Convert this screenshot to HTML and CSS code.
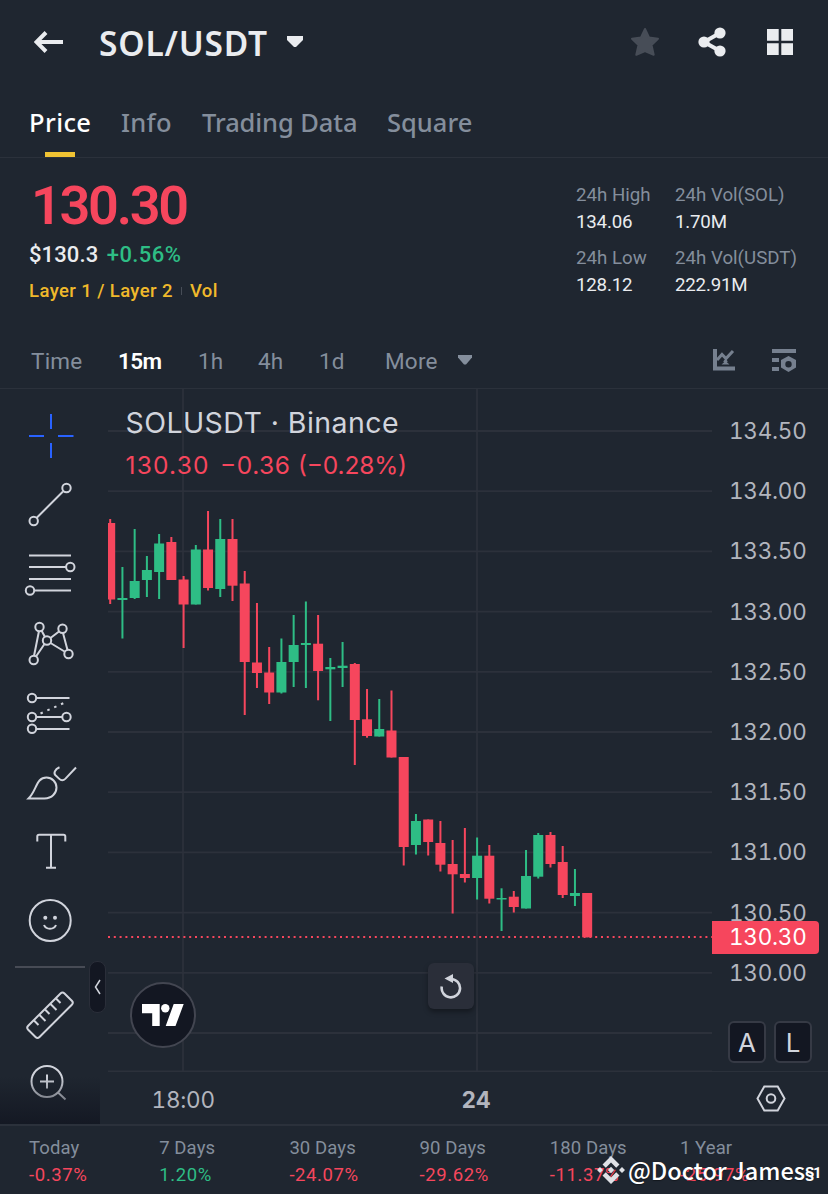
FILE: index.html
```html
<!DOCTYPE html>
<html lang="en">
<head>
    <meta charset="utf-8">
    <title>SOL/USDT</title>
    <link rel="stylesheet" href="styles.css">
</head>
<body>
    <div class="header">
        <svg class="back" width="30" height="24" viewBox="0 0 30 24"><path d="M29 12H3M12 2.5L2.500 12l9.500 9.500" fill="none" stroke="#eaecef" stroke-width="4"/></svg>
        <h1>SOL/USDT</h1>
        <svg class="caret" width="16" height="12" viewBox="0 0 16 12"><path d="M0 0h16v4l-7 7h-2l-7-7z" fill="#eaecef"/></svg>
        <div class="actions">
            <svg width="30" height="30" viewBox="0 0 30 30"><path d="M15 2l4 8.500 9 1.200-6.500 6.300 2.200 9.800L15 24l-8.700 3.800L8.500 18 2 11.700l9-1.200z" fill="#474d57" stroke="#474d57" stroke-width="2" stroke-linejoin="round"/></svg>
            <svg width="30" height="30" viewBox="0 0 30 30"><g fill="#eaecef"><circle cx="23" cy="6" r="5.600"/><circle cx="23" cy="24" r="5.600"/><circle cx="7" cy="15" r="5.600"/></g><path d="M23 6L7 15l16 9" fill="none" stroke="#eaecef" stroke-width="4"/></svg>
            <svg width="26" height="26" viewBox="0 0 26 26"><path d="M0 0h11.700v11.700H0zM14.300 0H26v11.700H14.300zM0 14.300h11.700V26H0zM14.300 14.300H26V26H14.300z" fill="#eaecef"/></svg>
        </div>
    </div>

    <div class="tabs">
        <span class="tab active">Price</span>
        <span class="tab info">Info</span>
        <span class="tab data">Trading Data</span>
        <span class="tab">Square</span>
    </div>

    <div class="summary">
        <div class="quote">
            <div class="last">130.30</div>
            <div class="fiat">$130.3 <span class="up">+0.56%</span></div>
            <div class="tags"><span>Layer 1 / Layer 2</span><i></i><span>Vol</span></div>
        </div>
        <div class="stats">
            <div><label>24h High</label><b>134.06</b></div>
            <div><label>24h Vol(SOL)</label><b>1.70M</b></div>
            <div><label>24h Low</label><b>128.12</b></div>
            <div><label>24h Vol(USDT)</label><b>222.91M</b></div>
        </div>
    </div>

    <div class="intervals">
        <span>Time</span>
        <span class="active">15m</span>
        <span>1h</span>
        <span>4h</span>
        <span>1d</span>
        <span>More</span>
        <svg class="more" width="14" height="10" viewBox="0 0 14 10"><path d="M0 0h14v2.500L8 9.500H6L0 2.500z" fill="#848e9c"/></svg>
        <div class="chart-actions">
            <svg width="22" height="22" viewBox="0 0 22 22"><path d="M2 0v19.500h20" fill="none" stroke="#76808f" stroke-width="4"/><path d="M4 11l5-5.500 4 4L20 2" fill="none" stroke="#76808f" stroke-width="3"/><path d="M12.500 9.500l2.300 3-2.300 1.500-2.300-1.500zM12.500 12l4 3.500h-8z" fill="#76808f"/></svg>
            <svg width="24" height="24" viewBox="0 0 24 24"><path d="M0 2h24M0 11h7M0 20h7" fill="none" stroke="#76808f" stroke-width="4"/><path d="M16.500 7l7.500 4v7.500l-7.500 4.500L9 18.500V11zM16.500 12a3.200 3.200 0 1 0 0 6.400 3.200 3.200 0 0 0 0-6.400z" fill="#76808f" fill-rule="evenodd"/></svg>
        </div>
    </div>

    <div class="chart">
        <div class="tools">
            <svg class="cross" viewBox="0 0 100 69"><path d="M51 13v15M51 42v15M29 35h15M58 35h15.500"/></svg>
            <svg viewBox="0 0 100 69"><path d="M36.500 48L63 21.500"/><circle cx="66.500" cy="18" r="4.200"/><circle cx="33.700" cy="51" r="4.200"/></svg>
            <svg viewBox="0 0 100 69"><path d="M29 16.500h42M29 28h37M29 40h42M34 51.500h37"/><circle cx="70.300" cy="28" r="4.200"/><circle cx="30" cy="51.500" r="4.200"/></svg>
            <svg viewBox="0 0 100 69"><path d="M34 48l5-25M41.500 22.500l3.500 6.500M50.500 30L59 23.500M63 25l4.500 17M64.500 43.500L50.500 35M44.500 36L36 48.500"/><circle cx="39.500" cy="19" r="4.200"/><circle cx="62.500" cy="20.700" r="4.200"/><circle cx="47" cy="32.500" r="4.200"/><circle cx="68.500" cy="46" r="4.200"/><circle cx="33.700" cy="52" r="4.200"/></svg>
            <svg viewBox="0 0 100 69"><path d="M36 21h33.500M36 40h26M36 52h33.500"/><path class="dots" d="M40.500 36.500L66 25"/><circle cx="32" cy="21" r="4.200"/><circle cx="32" cy="40" r="4.200"/><circle cx="66.500" cy="40" r="4.200"/><circle cx="32" cy="51.800" r="4.200"/></svg>
            <svg viewBox="0 0 100 69"><path d="M28.500 52.500C37 44 36 31.500 46.500 31.500C52 31.500 56.500 36 56.500 41.500C56.500 47 52 52.500 44.500 52.500zM59.500 21.300c-5 2-6 6-4 8l3.500 3.300c2 2 4.500 2 6.500 0l10.500-11.100"/></svg>
            <svg viewBox="0 0 100 69"><path d="M37.300 26.500v-5q0-1.800 1.800-1.800h24.400q1.800 0 1.800 1.800v5M51 19.700v33M46 52.700h10"/></svg>
            <svg viewBox="0 0 100 69"><circle cx="50.200" cy="36.500" r="20.500"/><path d="M44 41c2 5 10 5 12 0"/><g class="solid"><circle cx="45.300" cy="33.700" r="2"/><circle cx="55" cy="33.700" r="2"/></g></svg>
            <hr>
            <svg viewBox="0 0 100 69"><path d="M60.500 12.500q2-2 4 0l7.300 7.300q2 2 0 4L39.500 56q-2 2-4 0l-7.300-7.300q-2-2 0-4zM34 39.500l4.500 4.500M39.500 34l6 6M45 28.500l4.500 4.500M50.500 23l6 6M56 17.500l4.500 4.500"/></svg>
            <svg viewBox="0 0 100 69"><circle cx="47" cy="31.500" r="15.500"/><path d="M47 24.500v14M40 31.500h14M58 42.500l7.500 7"/></svg>
            <div class="collapse"><svg width="7" height="16" viewBox="0 0 7 16"><path d="M6 1L1.500 8 6 15" fill="none" stroke="#d1d4dc" stroke-width="1.500"/></svg></div>
        </div>

        <div class="plot">
            <svg width="612" height="683" viewBox="100 389 612 683">
                <g id="grid"></g>
                <g id="candles"></g>
                <path class="price-line" d="M108 937H712"/>
                <text class="name" x="125.500" y="432.500" textLength="273">SOLUSDT · Binance</text>
                <text class="change" x="125.500" y="474" textLength="83">130.30</text>
                <text class="change" x="220" y="474" textLength="70">−0.36</text>
                <text class="change" x="298" y="474" textLength="109">(−0.28%)</text>
            </svg>
            <div class="tv-logo"><svg width="42" height="22" viewBox="0 0 42 22"><path d="M0 0h17.700v22h-7.500V9.300H0zM31.700 0h10L33.500 22H23.700z" fill="#fff"/><circle cx="23.300" cy="4.300" r="4.200" fill="#fff"/></svg></div>
            <div class="reset"><svg width="24" height="26" viewBox="0 0 24 26"><path d="M2.800 13.500A9.200 9.200 0 1 0 12 6H10.500" fill="none" stroke="#d1d4dc" stroke-width="2.600"/><path d="M5.500 5.500L14 1v9z" fill="#d1d4dc"/></svg></div>
        </div>

        <div class="scale">
            <span>134.50</span><span>134.00</span><span>133.50</span><span>133.00</span><span>132.50</span>
            <span>132.00</span><span>131.50</span><span>131.00</span><span>130.50</span><span>130.00</span>
            <div class="current">130.30</div>
            <div class="modes"><b>A</b><b>L</b></div>
        </div>

        <div class="time-axis">
            <span>18:00</span>
            <strong>24</strong>
        </div>
        <div class="axis-settings"><svg width="30" height="27" viewBox="0 0 30 27"><path d="M8.300 1.500h13.400l6.800 12-6.800 12H8.300l-6.800-12z"/><circle cx="15" cy="13.500" r="4.300"/></svg></div>
    </div>

    <div class="periods">
        <div><label>Today</label><span class="down">-0.37%</span></div>
        <div><label>7 Days</label><span class="up">1.20%</span></div>
        <div><label>30 Days</label><span class="down">-24.07%</span></div>
        <div><label>90 Days</label><span class="down">-29.62%</span></div>
        <div><label>180 Days</label><span class="down">-11.37%</span></div>
        <div><label>1 Year</label><span class="down">-25.97%</span></div>
        <div class="credit">
            <svg width="28" height="28" viewBox="0 0 28 28"><path d="M14 0l8.500 8.500-3.300 3.300L14 6.600l-5.200 5.200-3.300-3.300zM14 28l8.500-8.500-3.300-3.300-5.200 5.200-5.200-5.200-3.300 3.300zM14 10.800l3.200 3.200-3.200 3.200-3.200-3.200zM3 11l3 3-3 3-3-3zM25 11l3 3-3 3-3-3z" fill="#dfe1e6"/></svg>
            <span>@Doctor James</span><small>§1</small>
        </div>
    </div>

    <script>
        // [colour, high, body top, body bottom, low]
        const candles = [
            ['r', 519, 523, 599.5, 604], ['g', 567, 598, 600, 638.5], ['g', 529, 581, 598, 599],
            ['g', 556, 570, 580, 597], ['g', 534, 543.5, 572, 599], ['r', 537, 542, 580, 580],
            ['r', 576, 579.5, 604.5, 648], ['g', 545, 549.5, 604.5, 604.5], ['r', 511, 549.5, 588, 590.5],
            ['g', 519, 539, 589, 597], ['r', 519, 539, 585.7, 601], ['r', 571, 583.5, 662, 715],
            ['r', 603, 662.5, 673, 688], ['r', 647, 672.5, 692.5, 704], ['g', 638.5, 662, 692.5, 693.5],
            ['g', 615, 645, 662, 687], ['g', 601.5, 643, 645, 688], ['r', 615, 643.7, 671, 700.3],
            ['g', 658, 667, 669.3, 721], ['g', 642, 665.7, 668, 687], ['r', 663, 664, 720, 765],
            ['r', 689, 719.3, 736, 737.7], ['g', 699, 729, 736.5, 736.5], ['r', 690.5, 730.5, 757.5, 757.5],
            ['r', 757, 757, 847, 865.5], ['g', 814, 821, 845, 854.5], ['r', 819.5, 819.5, 842, 855.5],
            ['r', 821, 843, 864.7, 871.5], ['r', 840, 864, 874.3, 913.5], ['r', 828, 874, 878, 882.5],
            ['g', 837.5, 855.7, 878, 899.5], ['r', 845, 855.7, 898.7, 903.5], ['g', 888.3, 898, 899.5, 931],
            ['r', 891, 896.7, 907, 912.5], ['g', 850, 876, 908.5, 908.5], ['g', 833, 835, 876.7, 878.5],
            ['r', 832, 835, 864, 867.5], ['r', 846, 862, 895, 898], ['g', 869, 893, 896, 906],
            ['r', 893, 893, 937.3, 937.3]
        ];

        let html = '';
        candles.forEach((c, i) => {
            const x = 110.2 + i * 12.23;
            const left = Math.max(108, x - 5);
            html += '<g class="' + c[0] + '">' +
                '<rect x="' + (x - 1) + '" y="' + c[1] + '" width="2" height="' + (c[4] - c[1]) + '"/>' +
                '<rect x="' + left + '" y="' + c[2] + '" width="' + (x + 5 - left) + '" height="' + (c[3] - c[2]) + '"/></g>';
        });
        document.getElementById('candles').innerHTML = html;

        let lines = 'M183 389V1071M477 389V1071M108 1071.500H712';
        for (let i = 0; i < 11; i++) {
            lines += 'M108 ' + (431 + i * 60.2) + 'H712';
        }
        document.getElementById('grid').innerHTML = '<path d="' + lines + '"/>';
    </script>
</body>
</html>
```
FILE: styles.css
```css
* { box-sizing: border-box; }
body { margin: 0; width: 828px; height: 1194px; overflow: hidden; background: #1f2630; color: #eaecef; font-family: Roboto, "Liberation Sans", sans-serif; }
svg { display: block; flex: none; }
label { display: block; }

.header { display: flex; align-items: center; height: 90px; padding: 0 35px 7px 34px; }
.header h1 { margin: 0 0 0 35px; width: 168px; font: 600 33.5px/40px "Noto Sans", sans-serif; letter-spacing: .8px; white-space: nowrap; padding-top: 3px; }
.caret { margin-left: 20px; }
.actions { display: flex; align-items: center; margin-left: auto; gap: 37px; }
.actions svg:last-child { margin-left: 3px; }

.tabs { display: flex; height: 68px; padding: 0 29px; gap: 30px; border-bottom: 1px solid #2b313b; font: 500 25.500px/64px "Noto Sans", sans-serif; color: #848e9c; white-space: nowrap; }
.tab.active { color: #fff; width: 62px; position: relative; letter-spacing: .4px; }
.tab.active::after { content: ""; position: absolute; left: 16px; bottom: 0; width: 30px; height: 5px; background: #f0c333; }
.tab.info { width: 51px; letter-spacing: .3px; }
.tab.data { width: 155px; letter-spacing: -.1px; }

.summary { display: flex; justify-content: space-between; height: 174px; padding: 20px 29px 0; }
.last { font-size: 54px; line-height: 56px; font-weight: 600; letter-spacing: -2.300px; color: #f6465d; padding-left: 2px; }
.fiat { font-size: 22px; line-height: 28px; font-weight: 500; margin-top: 7px; letter-spacing: .1px; }
.fiat .up { margin-left: 3px; letter-spacing: .4px; }
.up { color: #2ebd85; }
.down { color: #f6465d; }
.tags { display: flex; align-items: center; margin-top: 9px; font: 500 18.500px/26px Roboto, sans-serif; color: #f0b92b; letter-spacing: .4px; }
.tags i { width: 1px; height: 8px; background: #474d57; margin: 0 8px; }
.stats { display: grid; grid-template-columns: 99px 124px; grid-auto-rows: 63px; padding-top: 4px; font-size: 18.700px; line-height: 27px; }
.stats label { color: #848e9c; font-weight: 400; white-space: nowrap; }
.stats b { font-weight: 400; letter-spacing: -.2px; }

.intervals { display: flex; align-items: center; height: 57px; padding: 1px 31px 0; border-bottom: 1px solid #2b313b; font-size: 22.500px; letter-spacing: .2px; color: #848e9c; }
.intervals span { width: 60px; white-space: nowrap; }
.intervals span:first-child { width: 87px; }
.intervals .active { width: 80px; color: #fff; font-weight: 600; letter-spacing: -.6px; }
.intervals span:nth-child(4) { width: 61px; }
.intervals span:nth-child(5) { width: 66px; }
.intervals span:nth-child(6) { width: 73px; }
.intervals .more { margin-top: -2px; }
.chart-actions { display: flex; margin-left: auto; margin-right: 1px; gap: 37px; }

.chart { display: grid; grid-template-columns: 100px 612px 116px; grid-template-rows: 683px 52px; font-family: Inter, sans-serif; }
.tools { grid-row: 1 / 3; position: relative; padding-top: 12px; }
.tools > svg { width: 100px; height: 69px; fill: none; stroke: #d1d4dc; stroke-width: 2; }
.tools .cross { stroke: #2962ff; }
.tools .dots { stroke-dasharray: 2.500 5; }
.tools .solid { fill: #d1d4dc; stroke: none; }
.tools hr { width: 70px; height: 2px; margin: 13px 15px 13px; border: 0; background: #474b55; }
.tools::after { content: ""; position: absolute; left: 0; bottom: 0; width: 100px; height: 48px; background: linear-gradient(transparent, #131722); opacity: .9; }
.collapse { position: absolute; left: 89px; top: 572px; width: 17px; height: 52px; display: flex; align-items: center; justify-content: center; background: #131722; border: 1px solid #2a2e39; border-radius: 8px; z-index: 2; }

.plot { position: relative; }
#grid path { fill: none; stroke: #2c313b; stroke-width: 1.800; }
.g { fill: #2ebd85; }
.r { fill: #f6465d; }
.price-line { stroke: #f6465d; stroke-width: 2; stroke-dasharray: 2 3.800; }
.name { font-size: 28.500px; fill: #d1d4dc; }
.change { font-size: 24.500px; fill: #f6465d; }
.tv-logo { position: absolute; left: 30px; top: 593px; width: 66px; height: 66px; display: flex; align-items: center; justify-content: center; background: #131722; border: 2px solid #434651; border-radius: 50%; }
.reset { position: absolute; left: 327.500px; top: 574px; width: 46px; height: 46px; display: flex; align-items: center; justify-content: center; background: #2a2e39; border-radius: 6px; box-shadow: 0 3px 5px rgba(0,0,0,.35); }

.scale { position: relative; display: flex; flex-direction: column; padding: 12px 0 0 17px; font-size: 22.500px; font-variant-numeric: tabular-nums; color: #b2b5be; letter-spacing: -.25px; border-bottom: 1px solid #2b313b; }
.scale span { height: 60.200px; line-height: 60px; }
.current { position: absolute; left: 0; top: 531.500px; width: 106.500px; height: 33px; padding-left: 17px; line-height: 32px; color: #fff; background: #f6465d; border-radius: 0 4px 4px 0; }
.modes { display: flex; gap: 8px; margin-top: 18px; margin-left: -1px; }
.modes b { width: 38px; height: 42px; line-height: 39px; text-align: center; font-weight: 400; font-size: 26px; color: #d1d4dc; background: #131722; border: 2px solid #363a45; border-radius: 6px; letter-spacing: 0; }
.time-axis { display: flex; align-items: center; padding: 2px 0 0 51.500px; color: #b2b5be; font-size: 22.500px; font-variant-numeric: tabular-nums; }
.time-axis span { width: 64px; margin-right: 246px; white-space: nowrap; letter-spacing: -.2px; }
.axis-settings { display: flex; align-items: center; padding-left: 44px; }
.axis-settings svg { fill: none; stroke: #d1d4dc; stroke-width: 2; }

.periods { position: relative; display: grid; grid-template-columns: repeat(6, 130.200px); height: 70px; padding: 9px 0 0 29px; border-top: 2px solid #2b313b; font-size: 18.500px; line-height: 26px; letter-spacing: .1px; }
.periods label { color: #848e9c; white-space: nowrap; }
.periods .up, .periods .down { position: relative; top: 1px; letter-spacing: .6px; }
.credit { position: absolute; left: 597px; top: 28px; display: flex; align-items: center; color: #fff; font: 500 23.500px/32px "Noto Sans CJK SC", sans-serif; letter-spacing: 0; white-space: nowrap; }
.credit span { margin-left: 3px; text-shadow: 0 1px 1px rgba(0,0,0,.4); }
.credit small { font: 700 15px/16px Roboto, sans-serif; margin-top: 5px; letter-spacing: -1.500px; }
```
